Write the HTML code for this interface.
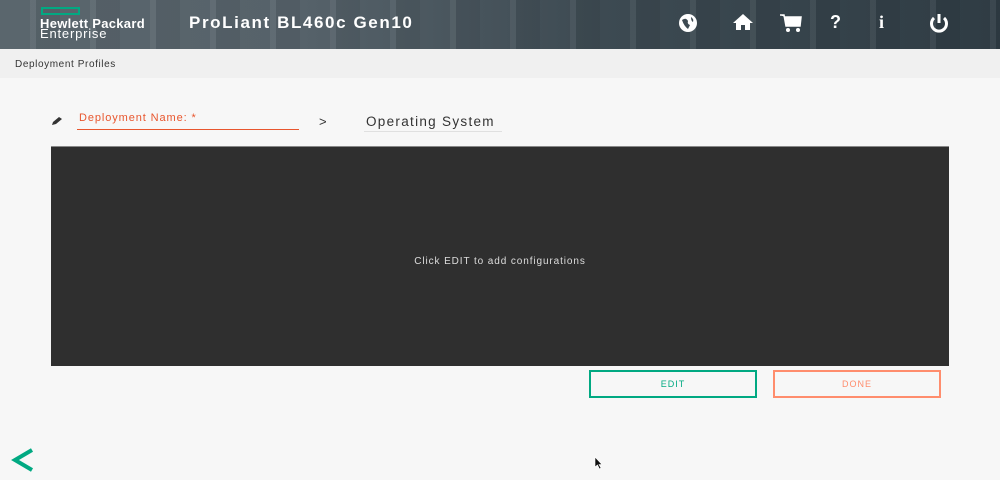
<!DOCTYPE html>
<html><head><style>
*{margin:0;padding:0;box-sizing:border-box}
body{width:1000px;height:480px;background:#f7f7f7;font-family:"Liberation Sans",sans-serif;position:relative;overflow:hidden}
.hdr{position:absolute;left:0;top:0;width:1000px;height:49px;background:linear-gradient(90deg,#5a666d 0%,#56626a 30%,#3d4a52 60%,#2f3c44 100%)}
.hdr .stripes{position:absolute;inset:0;background:repeating-linear-gradient(90deg,rgba(255,255,255,0) 0 30px,rgba(255,255,255,.06) 30px 36px,rgba(0,0,0,.06) 36px 60px)}
.logo{position:absolute;left:41px;top:7px;width:39px;height:8px;border:2px solid #01a982}
.t{position:absolute;color:#fff;white-space:nowrap}
.bc{position:absolute;left:0;top:49px;width:1000px;height:29px;background:#f0f0f0;font-size:10px;color:#333;padding:10px 0 0 15px;letter-spacing:.6px}
.ic{position:absolute;top:13px}
</style></head><body>
<div class="hdr"><div class="stripes"></div></div>
<div class="logo"></div>
<div class="t" style="left:40px;top:16px;font-size:13px;font-weight:bold;letter-spacing:.3px">Hewlett Packard</div>
<div class="t" style="left:40px;top:26px;font-size:13px;letter-spacing:.8px">Enterprise</div>
<div class="t" style="left:189px;top:13px;font-size:17px;letter-spacing:1.6px;font-weight:bold">ProLiant BL460c Gen10</div>
<svg class="ic" style="left:678px" width="20" height="20" viewBox="0 0 20 20"><circle cx="10" cy="10" r="9" fill="#fff"/><path d="M4 7 Q8 4 10 8 Q9 11 12 12 L10 16 Q6 13 4 7Z M13 4 Q16 6 15 9 Q13 8 13 4Z" fill="#3d4a52"/></svg>
<svg class="ic" style="left:732px" width="22" height="18" viewBox="0 0 22 18"><path d="M11 1 L1 10 H4 V17 H9 V12 H13 V17 H18 V10 H21Z" fill="#fff"/></svg>
<svg class="ic" style="left:780px" width="22" height="20" viewBox="0 0 22 20"><path d="M0 2 H4 L6 13 H20 L21 4 H5" fill="#fff" stroke="#fff" stroke-width="1.5"/><circle cx="8" cy="17" r="2" fill="#fff"/><circle cx="18" cy="17" r="2" fill="#fff"/></svg>
<div class="t" style="left:830px;top:12px;font-size:18px;font-weight:bold">?</div>
<div class="t" style="left:879px;top:12px;font-size:18px;font-weight:bold;font-family:'Liberation Serif',serif">i</div>
<svg class="ic" style="left:928px" width="22" height="20" viewBox="0 0 22 20"><path d="M6 5 A7.5 7.5 0 1 0 16 5" fill="none" stroke="#fff" stroke-width="3"/><line x1="11" y1="1" x2="11" y2="10" stroke="#fff" stroke-width="3"/></svg>
<div class="bc">Deployment Profiles</div>
<svg style="position:absolute;left:51px;top:116px" width="12" height="10" viewBox="0 0 12 10"><path d="M1 9 L2 6 L8 1 L11 3 L5 8Z" fill="#333"/></svg>
<div class="t" style="left:79px;top:112px;font-size:11px;color:#e8562e;letter-spacing:.9px">Deployment Name: *</div>
<div style="position:absolute;left:77px;top:129px;width:222px;height:1px;background:#e8562e"></div>
<div class="t" style="left:319px;top:114px;font-size:13px;color:#333">&gt;</div>
<div class="t" style="left:366px;top:114px;font-size:13.5px;color:#333;letter-spacing:1.3px">Operating System</div>
<div style="position:absolute;left:364px;top:131px;width:138px;height:1px;background:#e0e0e0"></div>
<div style="position:absolute;left:51px;top:146px;width:898px;height:220px;background:#2f2f2f;border-top:1px solid #888"></div>
<div class="t" style="left:0;width:1000px;text-align:center;top:256px;font-size:10px;color:#ddd;letter-spacing:.9px">Click EDIT to add configurations</div>
<div style="position:absolute;left:589px;top:370px;width:168px;height:28px;border:2px solid #01a982;color:#01a982;font-size:9px;text-align:center;line-height:24px;letter-spacing:1px">EDIT</div>
<div style="position:absolute;left:773px;top:370px;width:168px;height:28px;border:2px solid #ff8d6d;color:#ff8d6d;font-size:9px;text-align:center;line-height:24px;letter-spacing:1px">DONE</div>
<svg style="position:absolute;left:10px;top:447px" width="26" height="26" viewBox="0 0 26 26"><path d="M22 3 L5 13 L22 23" fill="none" stroke="#01a982" stroke-width="4"/></svg>
<svg style="position:absolute;left:594px;top:456px" width="10" height="14" viewBox="0 0 10 14"><path d="M1 1 L1 11 L3.5 9 L5.5 13 L7 12 L5 8.5 L8 8.5Z" fill="#111" stroke="#fff" stroke-width=".6"/></svg>
</body></html>
